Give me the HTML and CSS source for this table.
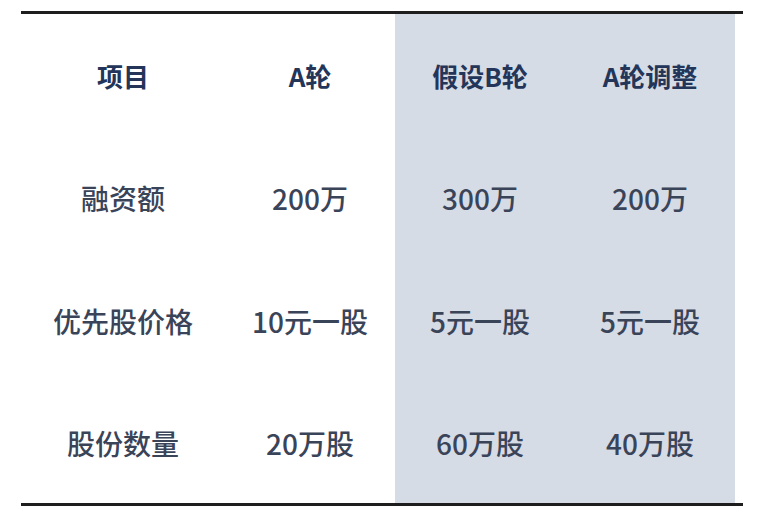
FILE: index.html
```html
<!DOCTYPE html>
<html lang="zh">
<head>
<meta charset="utf-8">
<link rel="stylesheet" href="styles.css">
</head>
<body>
<div class="table">
  <div class="cell head">项目</div>
  <div class="cell head">A轮</div>
  <div class="cell head shade">假设B轮</div>
  <div class="cell head shade">A轮调整</div>
  <div class="cell pad"></div>

  <div class="cell">融资额</div>
  <div class="cell">200万</div>
  <div class="cell shade">300万</div>
  <div class="cell shade">200万</div>
  <div class="cell pad"></div>

  <div class="cell">优先股价格</div>
  <div class="cell">10元一股</div>
  <div class="cell shade">5元一股</div>
  <div class="cell shade">5元一股</div>
  <div class="cell pad"></div>

  <div class="cell">股份数量</div>
  <div class="cell">20万股</div>
  <div class="cell shade">60万股</div>
  <div class="cell shade">40万股</div>
  <div class="cell pad"></div>
</div>
</body>
</html>
```
FILE: styles.css
```css
html, body {
  margin: 0;
  padding: 0;
  background: #ffffff;
}
body {
  font-family: "Noto Sans CJK SC", "Noto Sans", sans-serif;
}
.table {
  margin: 11px 0 0 21px;
  width: 722px;
  display: grid;
  grid-template-columns: 204px 170px 170px 170px 8px;
  grid-template-rows: 122px 123px 123px 121px;
  border-top: 3px solid #1e1e1e;
  border-bottom: 3px solid #1e1e1e;
}
.cell {
  display: flex;
  align-items: center;
  justify-content: center;
  font-size: 28px;
  font-weight: 500;
  color: #3a4459;
  white-space: nowrap;
}
.head {
  font-weight: 700;
  font-size: 26px;
  color: #233559;
}
.shade {
  background: #d6dce6;
}
```
